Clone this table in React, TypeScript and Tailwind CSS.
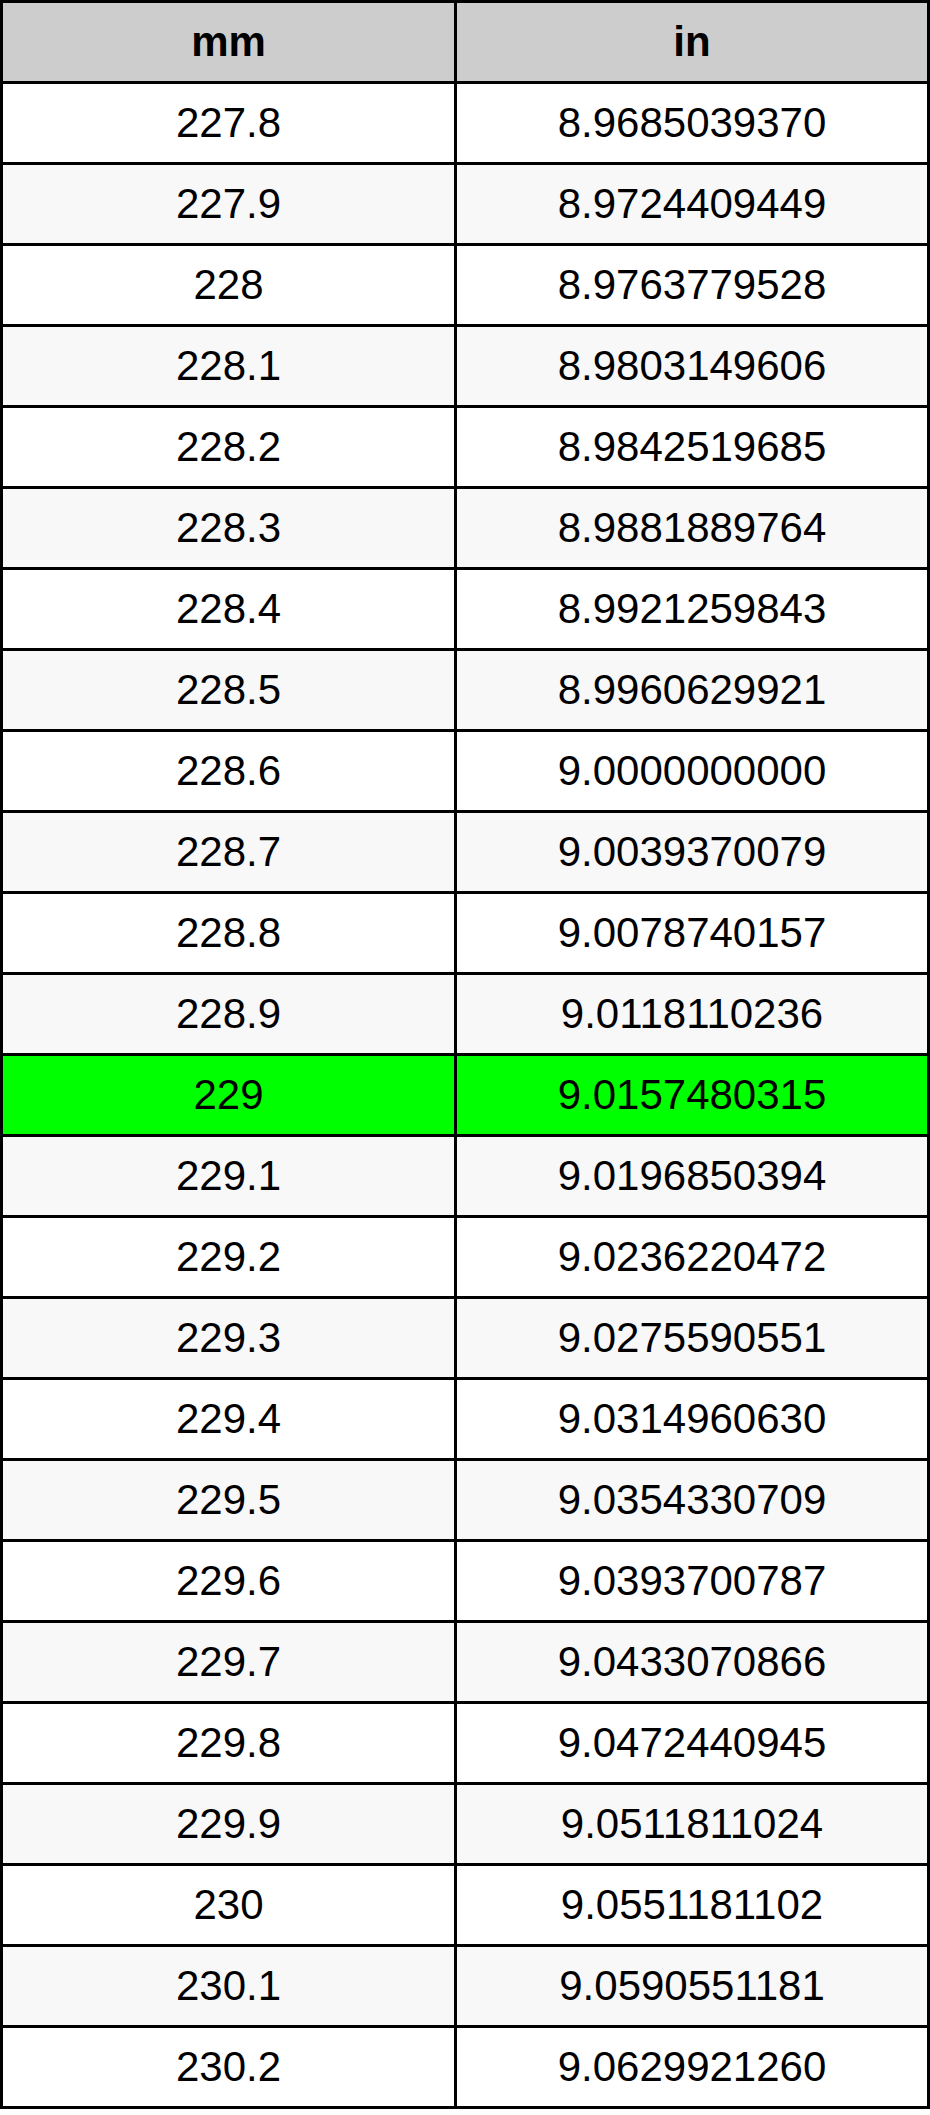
const rows: [string, string][] = [
  ["227.8", "8.9685039370"],
  ["227.9", "8.9724409449"],
  ["228", "8.9763779528"],
  ["228.1", "8.9803149606"],
  ["228.2", "8.9842519685"],
  ["228.3", "8.9881889764"],
  ["228.4", "8.9921259843"],
  ["228.5", "8.9960629921"],
  ["228.6", "9.0000000000"],
  ["228.7", "9.0039370079"],
  ["228.8", "9.0078740157"],
  ["228.9", "9.0118110236"],
  ["229", "9.0157480315"],
  ["229.1", "9.0196850394"],
  ["229.2", "9.0236220472"],
  ["229.3", "9.0275590551"],
  ["229.4", "9.0314960630"],
  ["229.5", "9.0354330709"],
  ["229.6", "9.0393700787"],
  ["229.7", "9.0433070866"],
  ["229.8", "9.0472440945"],
  ["229.9", "9.0511811024"],
  ["230", "9.0551181102"],
  ["230.1", "9.0590551181"],
  ["230.2", "9.0629921260"],
];

export default function App() {
  return (
    <div className="w-[930px] bg-white font-['Liberation_Sans',Arial,sans-serif] text-[42px] leading-none text-black">
      <div className="grid grid-cols-[451px_470px] auto-rows-[78px] gap-[3px] bg-black p-[3px]">
        <div className="flex items-center justify-center bg-[#cdcdcd] font-bold">mm</div>
        <div className="flex items-center justify-center bg-[#cdcdcd] font-bold">in</div>
        {rows.map(([mm, inch], i) => {
          const bg =
            mm === "229" ? "bg-[#00ff00]" : i % 2 === 1 ? "bg-[#f8f8f8]" : "bg-white";
          return [
            <div key={mm + "a"} className={`flex items-center justify-center ${bg}`}>
              {mm}
            </div>,
            <div key={mm + "b"} className={`flex items-center justify-center ${bg}`}>
              {inch}
            </div>,
          ];
        })}
      </div>
    </div>
  );
}
